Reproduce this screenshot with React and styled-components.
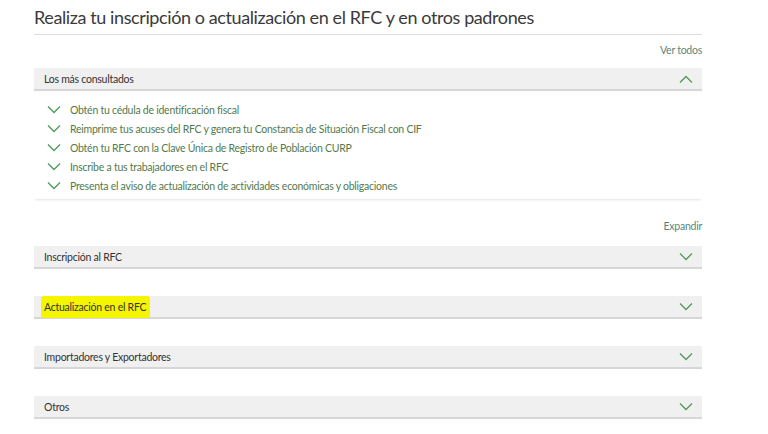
import React from "react";
import styled, { createGlobalStyle } from "styled-components";

const GlobalStyle = createGlobalStyle`
  body {
    margin: 0;
    background: #fff;
    font-family: Lato, "Open Sans", sans-serif;
  }
`;

const popular = [
  "Obtén tu cédula de identificación fiscal",
  "Reimprime tus acuses del RFC y genera tu Constancia de Situación Fiscal con CIF",
  "Obtén tu RFC con la Clave Única de Registro de Población CURP",
  "Inscribe a tus trabajadores en el RFC",
  "Presenta el aviso de actualización de actividades económicas y obligaciones",
];

const sections = [
  { title: "Inscripción al RFC" },
  { title: "Actualización en el RFC", marked: true },
  { title: "Importadores y Exportadores" },
  { title: "Otros" },
];

const Chevron = ({ up, size = 14 }) => (
  <svg width={size} height={size / 2 + 1} viewBox="0 0 14 8" fill="none">
    <path
      d={up ? "M1 7.5 L7 1.5 L13 7.5" : "M1 0.5 L7 6.5 L13 0.5"}
      stroke="#4f9a5c"
      strokeWidth="1.3"
    />
  </svg>
);

export default function App() {
  return (
    <>
      <GlobalStyle />
      <Page>
        <Title>Realiza tu inscripción o actualización en el RFC y en otros padrones</Title>
        <LinkRow $top={7} $bottom={10}>
          <TextLink>Ver todos</TextLink>
        </LinkRow>
        <Panel>
          <PanelHeader>
            <HeaderText>Los más consultados</HeaderText>
            <Chevron up />
          </PanelHeader>
          <List>
            {popular.map((item) => (
              <Item key={item}>
                <Chevron />
                <span>{item}</span>
              </Item>
            ))}
          </List>
        </Panel>
        <LinkRow $top={19} $bottom={12}>
          <TextLink>Expandir</TextLink>
        </LinkRow>
        <Sections>
          {sections.map((s) => (
            <PanelHeader key={s.title}>
              <HeaderText $marked={s.marked}>{s.title}</HeaderText>
              <Chevron />
            </PanelHeader>
          ))}
        </Sections>
      </Page>
    </>
  );
}

const Page = styled.div`
  width: 668px;
  margin-left: 34px;
  padding-top: 4px;
`;

const Title = styled.h1`
  margin: 0;
  padding-bottom: 4px;
  font-size: 18px;
  letter-spacing: -0.4px;
  font-weight: 400;
  line-height: 26px;
  color: #3a3a3a;
  border-bottom: 1px solid #dcdcdc;
`;

const LinkRow = styled.div`
  display: flex;
  justify-content: flex-end;
  padding: ${(p) => p.$top}px 0 ${(p) => p.$bottom}px;
`;

const TextLink = styled.a`
  font-size: 10.5px;
  letter-spacing: -0.25px;
  line-height: 16px;
  color: #5b8577;
  cursor: pointer;
`;

const Panel = styled.section`
  box-shadow: 0 2px 2px -1px #e4e4e4;
`;

const PanelHeader = styled.div`
  display: flex;
  align-items: center;
  justify-content: space-between;
  height: 21px;
  padding: 0 9px 0 10px;
  background: #f0f0f0;
  border-bottom: 2px solid #d6d6d6;
  font-size: 10.5px;
  letter-spacing: -0.25px;
  color: #333;
`;

const HeaderText = styled.span`
  background: ${(p) => (p.$marked ? "#f5f500" : "transparent")};
  padding: ${(p) => (p.$marked ? "5px 4px 5px 3px" : "0")};
  margin-left: ${(p) => (p.$marked ? "-3px" : "0")};
  border-radius: 3px;
`;

const List = styled.ul`
  list-style: none;
  margin: 0;
  padding: 9px 0 4px 13px;
`;

const Item = styled.li`
  display: flex;
  align-items: center;
  gap: 9px;
  height: 19px;
  font-size: 10.5px;
  letter-spacing: -0.25px;
  color: #547a4c;
`;

const Sections = styled.div`
  display: flex;
  flex-direction: column;
  gap: 27px;
`;
